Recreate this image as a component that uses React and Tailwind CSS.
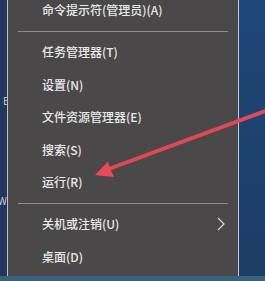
import React from "react";

const items1 = ["命令提示符(管理员)(A)"];
const items2 = ["任务管理器(T)", "设置(N)", "文件资源管理器(E)", "搜索(S)", "运行(R)"];

function Item({ label, chevron }) {
  return (
    <div className="h-[32.5px] shrink-0 flex items-center pl-[34px] pr-[12px] justify-between">
      <span>{label}</span>
      {chevron && (
        <svg width="8" height="14" viewBox="0 0 8 14" className="mr-[1px]">
          <path d="M1 1 L7 7 L1 13" fill="none" stroke="#d8d8d8" strokeWidth="1.2" />
        </svg>
      )}
    </div>
  );
}

function Sep() {
  return (
    <div className="h-[9.5px] shrink-0 flex items-center pl-[10px] pr-[10px]">
      <div className="h-px w-full bg-[#8c8a8b]" />
    </div>
  );
}

export default function App() {
  return (
    <div
      className="relative w-[265px] h-[281px] overflow-hidden flex flex-col"
      style={{ fontFamily: '"Noto Sans CJK SC", "Noto Sans", sans-serif' }}
    >
      <div className="flex flex-1 min-h-0">
        <div className="w-[7px] bg-[#22375a] overflow-hidden text-[#c9cfd8] text-[10px] leading-none">
          <div className="pt-[96px] pl-[3px]">E</div>
          <div className="pt-[90px] -ml-[2px]">W</div>
        </div>
        <div className="w-px bg-[#bfc0c6]" />
        <div className="w-[230px] bg-[#4a4849] text-[#e8e8e8] text-[12px] font-medium flex flex-col overflow-hidden">
          <div className="-mt-[6px] flex flex-col">
            {items1.map((t) => (
              <Item key={t} label={t} />
            ))}
            <Sep />
            {items2.map((t) => (
              <Item key={t} label={t} />
            ))}
            <Sep />
            <Item label="关机或注销(U)" chevron />
            <Item label="桌面(D)" />
          </div>
        </div>
        <div className="w-px bg-[#c6c7cc]" />
        <div className="flex-1 bg-gradient-to-b from-[#1f4778] to-[#1c3d66]" />
      </div>
      <div className="h-[5px] bg-[#3b6178]" />
      <svg
        className="absolute inset-0 pointer-events-none"
        width="265"
        height="281"
        viewBox="0 0 265 281"
      >
        <line x1="268" y1="110" x2="106" y2="170" stroke="#e84a57" strokeWidth="3.8" strokeLinecap="round" opacity="0.95" />
        <polygon points="95,175 108,161.5 110,168.5 114,177" fill="#ea4a58" />
      </svg>
    </div>
  );
}
